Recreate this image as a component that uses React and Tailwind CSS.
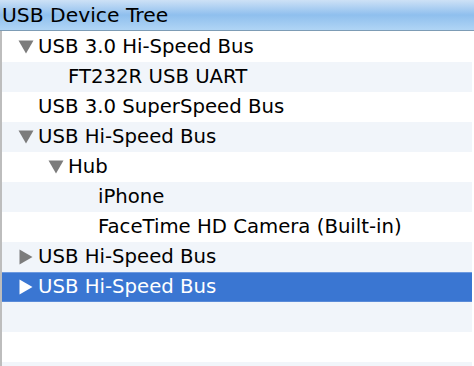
import React from "react";

const rows = [
  { level: 0, label: "USB 3.0 Hi-Speed Bus", tri: "down" },
  { level: 1, label: "FT232R USB UART" },
  { level: 0, label: "USB 3.0 SuperSpeed Bus" },
  { level: 0, label: "USB Hi-Speed Bus", tri: "down" },
  { level: 1, label: "Hub", tri: "down" },
  { level: 2, label: "iPhone" },
  { level: 2, label: "FaceTime HD Camera (Built-in)" },
  { level: 0, label: "USB Hi-Speed Bus", tri: "right" },
  { level: 0, label: "USB Hi-Speed Bus", tri: "right", selected: true },
  { empty: true },
  { empty: true },
  { empty: true },
];

function Tri({ dir, color }) {
  if (dir === "down") {
    return (
      <svg width="16" height="14" viewBox="0 0 16 14" className="block">
        <polygon points="0.5,0.5 15.5,0.5 8,13.5" fill={color} />
      </svg>
    );
  }
  return (
    <svg width="16" height="16" viewBox="0 0 16 16" className="block">
      <polygon points="1.5,0.5 14.5,8 1.5,15.5" fill={color} />
    </svg>
  );
}

const indentClass = ["pl-[36px]", "pl-[66px]", "pl-[96px]"];
const triPad = ["left-[16px]", "left-[46px]", "left-[76px]"];

export default function App() {
  return (
    <div
      className="w-[474px] h-[366px] overflow-hidden bg-white relative"
      style={{ fontFamily: '"DejaVu Sans", "Lucida Grande", sans-serif' }}
    >
      <div className="h-[31px] bg-gradient-to-b from-[#cde1f6] via-[#8fbfee] to-[#b0d5f5] border-b border-[#7d9cb5] flex items-center pl-[2px] text-[20.3px] text-black leading-none">
        USB Device Tree
      </div>
      <div className="flex">
        <div className="w-[2px] bg-[#bdbdbd] self-stretch" />
        <div className="flex-1 flex flex-col pt-[1px]">
          {rows.map((r, i) => {
            const odd = i % 2 === 1;
            const bg = r.selected
              ? "bg-[#3a76d2] border-t border-b border-t-[#6d9ae0] border-b-[#5a8bd8]"
              : odd
              ? "bg-[#f1f5fa]"
              : "bg-white";
            return (
              <div
                key={i}
                className={`relative h-[30px] w-[470px] flex items-center ${bg}`}
              >
                {!r.empty && (
                  <>
                    {r.tri && (
                      <div className={`absolute ${triPad[r.level]} top-1/2 -translate-y-1/2`}>
                        <Tri dir={r.tri} color={r.selected ? "#ffffff" : "#7c7c7c"} />
                      </div>
                    )}
                    <span
                      className={`${indentClass[r.level]} text-[19.7px] leading-none whitespace-nowrap ${
                        r.selected ? "text-white" : "text-black"
                      }`}
                    >
                      {r.label}
                    </span>
                  </>
                )}
              </div>
            );
          })}
        </div>
      </div>
    </div>
  );
}
